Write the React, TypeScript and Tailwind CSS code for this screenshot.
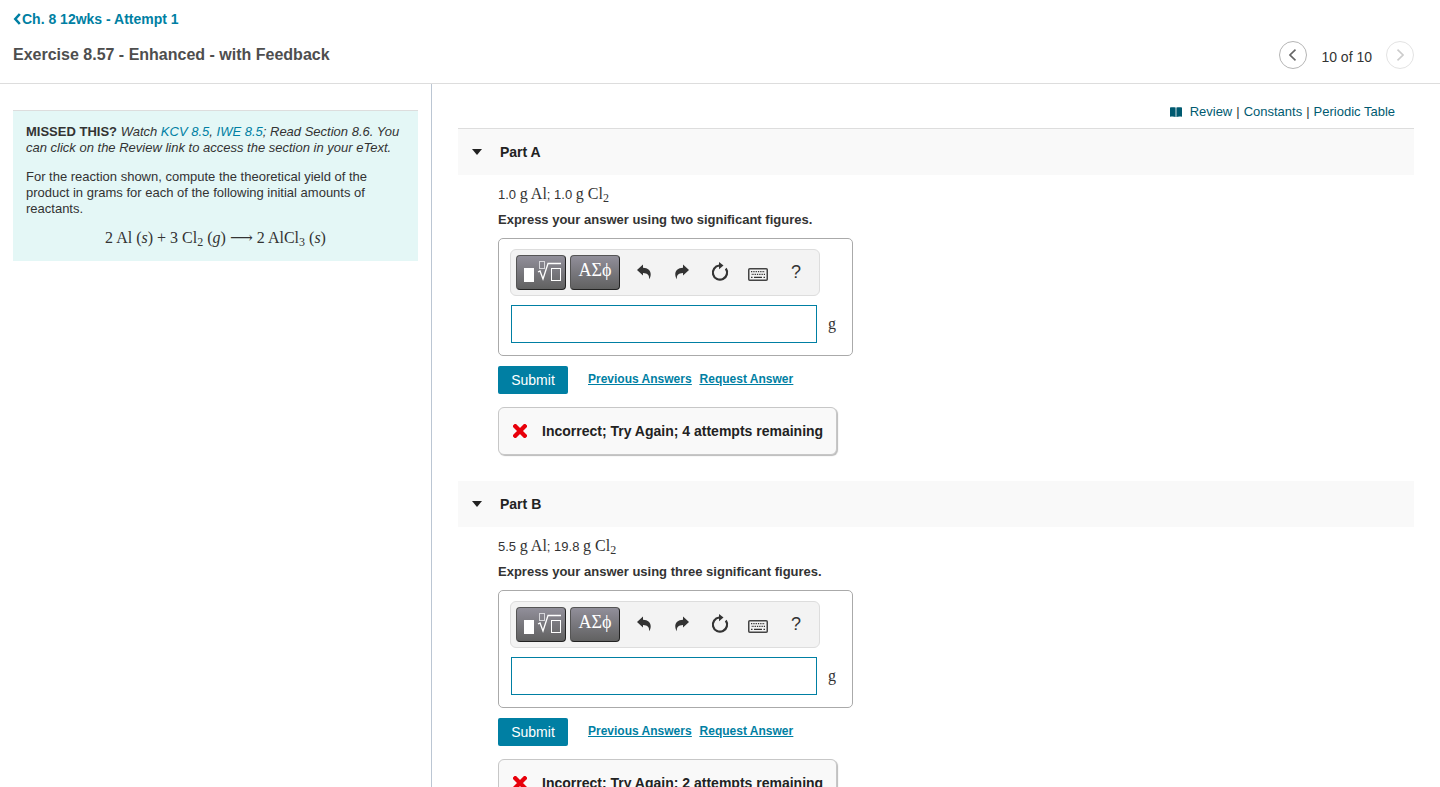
import React from "react";

type Part = {
  name: string;
  aluminum: string;
  chlorine: string;
  figures: string;
  attempts: number;
};

const parts: Part[] = [
  { name: "A", aluminum: "1.0", chlorine: "1.0", figures: "two", attempts: 4 },
  {
    name: "B",
    aluminum: "5.5",
    chlorine: "19.8",
    figures: "three",
    attempts: 2,
  },
];

const Math = ({ children }: { children: React.ReactNode }) => (
  <span className="font-['Liberation_Serif','DejaVu_Serif',serif] text-base leading-4">
    {children}
  </span>
);

const Sub = ({ children }: { children: React.ReactNode }) => (
  <sub className="text-xs leading-none">{children}</sub>
);

const TemplateIcon = () => (
  <svg width="40" height="24" viewBox="0 0 40 24" fill="none" aria-hidden="true">
    <rect x="3" y="8" width="10" height="14" fill="#fff" />
    <g stroke="#fff">
      <rect x="18.500" y="1.500" width="5" height="7" stroke="#d6d6da" />
      <path d="M17 12l2-1 3 8L27 3.500H40" strokeWidth="1.300" />
      <rect x="30.500" y="8.500" width="9" height="12" />
    </g>
  </svg>
);

const ArrowIcon = ({ flipped }: { flipped?: boolean }) => (
  <svg
    width="14"
    height="16"
    viewBox="0 0 14 16"
    fill="#333"
    className={flipped ? "-scale-x-100" : ""}
    aria-hidden="true"
  >
    <path d="M0 6L6 .5v3.200c5 .1 8 3 7.700 7-.1 1.900-.7 3.300-1.700 4.500.5-3.700-1.200-6-6-6.100V11.500z" />
  </svg>
);

const ResetIcon = () => (
  <svg width="18" height="20" viewBox="0 0 18 20" aria-hidden="true">
    <path
      d="M14.800 6.500A7.100 7.100 0 1 1 8.300 3.500"
      fill="none"
      stroke="#333"
      strokeWidth="2.200"
    />
    <path d="M8 0l4.500 3.500L8 7.300z" fill="#333" />
  </svg>
);

const KeyboardIcon = () => (
  <svg width="20" height="13" viewBox="0 0 20 13" fill="none" aria-hidden="true">
    <rect x=".75" y=".75" width="18.500" height="11.500" rx="1" stroke="#444" strokeWidth="1.500" />
    <g stroke="#333" strokeWidth="1.300">
      <path d="M3 3.700h14" strokeDasharray="1.300 1" />
      <path d="M3 6.400h14" strokeDasharray="1.300 1" strokeDashoffset="1" />
      <path d="M3 9.300h1.500M6 9.300h8M15.500 9.300H17" />
    </g>
  </svg>
);

const BookIcon = () => (
  <svg width="12" height="10" viewBox="0 0 12 10" fill="#005a70" aria-hidden="true">
    <path d="M0 .5C2 0 4 0 5.600.6V10C4 9.300 2 9.300 0 9.700zM12 .5C10 0 8 0 6.400.6V10c1.600-.7 3.600-.7 5.600-.3z" />
  </svg>
);

const CrossIcon = () => (
  <svg width="14" height="14" viewBox="0 0 14 14" aria-hidden="true">
    <path
      d="M2.300 2.300l9.400 9.400M11.700 2.300l-9.400 9.400"
      stroke="#e8000b"
      strokeWidth="4.300"
      strokeLinecap="square"
      strokeLinejoin="round"
    />
  </svg>
);

const Chevron = ({ right }: { right?: boolean }) => (
  <svg
    width="8"
    height="12"
    viewBox="0 0 8 12"
    fill="none"
    stroke="currentColor"
    strokeWidth="1.600"
    className={right ? "-scale-x-100" : ""}
    aria-hidden="true"
  >
    <path d="M6.500.7L1 6l5.500 5.300" />
  </svg>
);

const darkButton =
  "flex h-[35px] w-[50px] items-center justify-center rounded border border-[#555] border-r-[#222] border-b-[#222] bg-linear-to-b from-[#918f9a] to-[#616161] text-white";

const iconButton = "flex h-8 w-[38px] items-center justify-center text-[#333]";

const Toolbar = () => (
  <div className="flex h-[47px] w-[310px] items-center rounded-md border border-[#ddd] bg-[#f3f3f3] pb-px pl-[5px]">
    <button type="button" aria-label="Templates" className={darkButton}>
      <TemplateIcon />
    </button>
    <button
      type="button"
      aria-label="Symbols"
      className={`${darkButton} ml-1 mr-[5px] pb-1 font-['Liberation_Serif',serif] text-lg`}
    >
      ΑΣϕ
    </button>
    <button type="button" aria-label="Undo" className={iconButton}>
      <ArrowIcon />
    </button>
    <button type="button" aria-label="Redo" className={iconButton}>
      <ArrowIcon flipped />
    </button>
    <button type="button" aria-label="Reset" className={iconButton}>
      <ResetIcon />
    </button>
    <button type="button" aria-label="Keyboard shortcuts" className={`${iconButton} pt-1`}>
      <KeyboardIcon />
    </button>
    <button type="button" aria-label="Help" className={`${iconButton} text-lg`}>
      ?
    </button>
  </div>
);

const PartSection = ({ name, aluminum, chlorine, figures, attempts }: Part) => {
  const [open, setOpen] = React.useState(true);

  return (
    <section className="mb-[26px]">
      <h2 className="bg-[#f9f9f9]">
        <button
          type="button"
          onClick={() => setOpen(!open)}
          aria-expanded={open}
          className="flex h-[46px] w-full items-center gap-[18px] pl-[14px] text-sm font-bold text-[#222]"
        >
          <svg width="10" height="6" viewBox="0 0 10 6" fill="#222" aria-hidden="true">
            <path d="M0 0h10L5 6z" />
          </svg>
          Part {name}
        </button>
      </h2>
      {open && (
        <div className="flex flex-col items-start pl-10 pt-[11px]">
          <p className="mb-[9px] text-[13px] leading-4">
            {aluminum} <Math>g Al</Math>; {chlorine}{" "}
            <Math>
              g Cl<Sub>2</Sub>
            </Math>
          </p>
          <p className="mb-[10px] text-[13px] leading-4 font-bold">
            Express your answer using {figures} significant figures.
          </p>
          <div className="mb-[10px] w-[355px] rounded-[5px] border border-[#aaa] px-[11px] pb-3 pt-[10px]">
            <Toolbar />
            <div className="mt-[9px] flex items-center gap-[11px] pl-px">
              <input
                id={`answer-${name}`}
                type="text"
                className="h-[38px] w-[306px] border border-[#007fa3] px-2 text-base outline-none"
              />
              <label htmlFor={`answer-${name}`}>
                <Math>g</Math>
              </label>
            </div>
          </div>
          <div className="mb-[13px] flex items-center">
            <button
              type="button"
              className="mr-5 h-7 w-[70px] rounded-xs bg-[#007fa3] text-sm font-medium text-white"
            >
              Submit
            </button>
            <div className="flex gap-2 pb-[2px] text-xs font-bold text-[#007fa3] underline">
              <a href="#previous">Previous Answers</a>
              <a href="#request">Request Answer</a>
            </div>
          </div>
          <div className="flex h-12 w-[339px] items-center gap-[15px] rounded-md border border-[#c7c7c7] bg-[#f9f9f9] pl-[14px] shadow-[1px_1px_1px_#bbb]">
            <CrossIcon />
            <p className="text-sm font-bold whitespace-nowrap text-[#222]">
              Incorrect; Try Again; {attempts} attempts remaining
            </p>
          </div>
        </div>
      )}
    </section>
  );
};

const App = () => {
  return (
    <div className="flex h-screen flex-col bg-white font-['Liberation_Sans',Arial,sans-serif] text-[#333]">
      <header className="flex shrink-0 justify-between border-b border-[#ddd] pb-[14px] pl-[13px] pr-[26px] pt-[9px]">
        <div className="pb-1">
          <a
            href="#assignment"
            className="flex items-center gap-px text-sm leading-5 font-bold text-[#007fa3]"
          >
            <svg width="8" height="12" viewBox="0 0 8 12" fill="none" aria-hidden="true">
              <path d="M6.800 1L2.300 6l4.500 5" stroke="#007fa3" strokeWidth="2.600" />
            </svg>
            Ch. 8 12wks - Attempt 1
          </a>
          <h1 className="mt-4 text-base leading-5 font-bold text-[#4e4e4e]">
            Exercise 8.57 - Enhanced - with Feedback
          </h1>
        </div>
        <nav className="flex items-center gap-[14px] self-end text-sm">
          <button
            type="button"
            aria-label="Previous item"
            className="flex size-7 items-center justify-center rounded-full border border-[#b5b5b5] text-[#666]"
          >
            <Chevron />
          </button>
          <span className="pt-1">10 of 10</span>
          <button
            type="button"
            disabled
            aria-label="Next item"
            className="flex size-7 items-center justify-center rounded-full border border-[#e3e3e3] text-[#ccc]"
          >
            <Chevron right />
          </button>
        </nav>
      </header>
      <div className="flex min-h-0 flex-1">
        <aside className="w-[30%] shrink-0 overflow-y-auto border-r border-[#bbc6d3] px-[13px] pt-[26px]">
          <div className="border-t border-[#ddd] bg-[#e4f7f6] px-[13px] pb-[14px] pt-[13px] text-[13px] leading-4">
            <p className="mb-[13px] italic">
              <b className="not-italic">MISSED THIS?</b> Watch{" "}
              <a href="#kcv" className="text-[#007fa3]">
                KCV 8.5
              </a>
              ,{" "}
              <a href="#iwe" className="text-[#007fa3]">
                IWE 8.5
              </a>
              ; Read Section 8.6. You can click on the Review link to access the
              section in your eText.
            </p>
            <p className="mb-[13px]">
              For the reaction shown, compute the theoretical yield of the
              product in grams for each of the following initial amounts of
              reactants.
            </p>
            <p className="text-center">
              <Math>
                2 Al (<i>s</i>) + 3 Cl<Sub>2</Sub> (<i>g</i>) {" "}⟶ 2 AlCl
                <Sub>3</Sub> (<i>s</i>)
              </Math>
            </p>
          </div>
        </aside>
        <main className="flex-1 overflow-y-auto px-[26px] pt-[19px]">
          <div className="flex items-center justify-end gap-1 border-b border-[#ddd] pb-2 pr-[19px] text-[13px] leading-[17px]">
            <a href="#review" className="flex items-center gap-2 text-[#005a70]">
              <BookIcon />
              Review
            </a>
            <span>|</span>
            <a href="#constants" className="text-[#005a70]">
              Constants
            </a>
            <span>|</span>
            <a href="#periodic-table" className="text-[#005a70]">
              Periodic Table
            </a>
          </div>
          {parts.map((part) => (
            <PartSection key={part.name} {...part} />
          ))}
        </main>
      </div>
    </div>
  );
};

export default App;
